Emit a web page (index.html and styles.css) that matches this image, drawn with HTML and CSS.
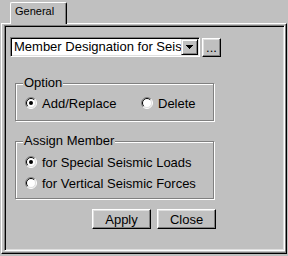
FILE: index.html
```html
<!DOCTYPE html>
<html lang="en">
<head>
    <meta charset="UTF-8">
    <meta name="viewport" content="width=device-width, initial-scale=1.0">
    <title>Member Designation for Seismic</title>
    <link rel="stylesheet" href="styles.css">
</head>
<body>

    <svg class="defs" width="0" height="0">
        <symbol id="radio-off" viewBox="0 0 12 12">
            <circle cx="6" cy="6" r="5" fill="#fff"/>
            <path d="M2.1 9.9A5.5 5.5 0 0 1 9.9 2.1" fill="none" stroke="#808080"/>
            <path d="M9.9 2.1A5.5 5.5 0 0 1 2.1 9.9" fill="none" stroke="#fff"/>
            <path d="M2.8 9.2A4.5 4.5 0 0 1 9.2 2.8" fill="none" stroke="#000"/>
            <path d="M9.2 2.8A4.5 4.5 0 0 1 2.8 9.2" fill="none" stroke="#dfdfdf"/>
        </symbol>
        <symbol id="radio-on" viewBox="0 0 12 12">
            <use href="#radio-off"/>
            <circle cx="6" cy="6" r="2" fill="#000"/>
        </symbol>
    </svg>

    <div class="tabs">
        <div class="tab">General</div>
    </div>

    <div class="pane">
        <div class="panel">

            <div class="combo-row">
                <div class="combo">
                    <span class="combo-text">Member Designation for Seismic</span>
                    <span class="combo-btn">
                        <svg width="7" height="4" viewBox="0 0 7 4"><path d="M0 0h7v1H0zM1 1h5v1H1zM2 2h3v1H2zM3 3h1v1H3z" fill="#000"/></svg>
                    </span>
                </div>
                <button class="btn btn-more">...</button>
            </div>

            <fieldset class="group group-option">
                <legend>Option</legend>
                <div class="radio-row">
                    <label class="radio radio-wide"><svg class="rb"><use href="#radio-on"/></svg>Add/Replace</label>
                    <label class="radio"><svg class="rb"><use href="#radio-off"/></svg>Delete</label>
                </div>
            </fieldset>

            <fieldset class="group group-assign">
                <legend>Assign Member</legend>
                <label class="radio"><svg class="rb"><use href="#radio-on"/></svg>for Special Seismic Loads</label>
                <label class="radio"><svg class="rb"><use href="#radio-off"/></svg>for Vertical Seismic Forces</label>
            </fieldset>

            <div class="actions">
                <button class="btn">Apply</button>
                <button class="btn">Close</button>
            </div>

        </div>
    </div>

</body>
</html>
```

FILE: styles.css
```css
* {
    box-sizing: border-box;
}
body {
    font-family: 'Liberation Sans', Arial, sans-serif;
    font-size: 13px;
    color: #000;
    background-color: #c0c0c0;
    margin: 0;
    width: 288px;
    height: 256px;
    overflow: hidden;
}
.defs {
    position: absolute;
}
.tabs {
    display: flex;
    align-items: flex-start;
    height: 23px;
    padding-left: 10px;
}
.tab {
    position: relative;
    width: 57px;
    height: 22px;
    margin-top: 2px;
    margin-bottom: -1px;
    padding-left: 4px;
    border-top: 1px solid #fff;
    border-left: 1px solid #fff;
    border-right: 1px solid #000;
    border-radius: 2px 2px 0 0;
    box-shadow: inset -1px 0 #808080;
    background-color: #c0c0c0;
    font-size: 11px;
    line-height: 17px;
}
.pane {
    width: 286px;
    height: 231px;
    margin-left: 1px;
    padding: 1px 1px 2px 2px;
    border-top: 1px solid #fff;
    border-left: 1px solid #fff;
    border-right: 1px solid #000;
    border-bottom: 1px solid #000;
    box-shadow: inset -1px -1px #808080;
}
.panel {
    height: 100%;
    display: flex;
    flex-direction: column;
    align-items: flex-start;
    padding: 11px 0 0 5px;
    border: 1px solid;
    border-color: #808080 #fff #fff #808080;
    box-shadow: inset 1px 1px #000, inset -1px -1px #dfdfdf;
}
.combo-row {
    display: flex;
    align-items: flex-start;
}
.combo {
    display: flex;
    width: 190px;
    height: 20px;
    padding: 1px;
    background-color: #fff;
    border: 1px solid;
    border-color: #808080 #fff #fff #808080;
    box-shadow: inset 1px 1px #000, inset -1px -1px #dfdfdf;
}
.combo-text {
    flex: 1;
    padding-left: 2px;
    line-height: 16px;
    white-space: nowrap;
    overflow: hidden;
}
.combo-btn {
    display: flex;
    align-items: center;
    justify-content: center;
    width: 17px;
    height: 16px;
    background-color: #c0c0c0;
    border: 1px solid;
    border-color: #dfdfdf #000 #000 #dfdfdf;
    box-shadow: inset 1px 1px #fff, inset -1px -1px #808080;
}
.btn {
    font: inherit;
    color: #000;
    background-color: #c0c0c0;
    padding: 0;
    border: 1px solid;
    border-color: #fff #000 #000 #fff;
    box-shadow: inset -1px -1px #808080, inset 1px 1px #dfdfdf;
}
.btn-more {
    width: 19px;
    height: 19px;
    margin-top: 1px;
    margin-left: 2px;
    line-height: 15px;
}
.group {
    width: 199px;
    margin: 0 0 0 5px;
    min-width: 0;
    border: 1px solid #808080;
    box-shadow: inset 1px 1px #fff, 1px 1px #fff;
}
.group legend {
    margin-left: -2px;
    padding: 0 1px;
    line-height: 14px;
    background-color: #c0c0c0;
}
.group-option {
    margin-top: 19px;
    padding: 5px 0 9px 9px;
}
.group-assign {
    margin-top: 13px;
    padding: 6px 0 7px 9px;
}
.radio-row {
    display: flex;
}
.radio {
    display: flex;
    align-items: center;
    gap: 5px;
    height: 16px;
}
.radio + .radio {
    margin-top: 5px;
}
.radio-row .radio + .radio {
    margin-top: 0;
}
.radio-wide {
    width: 116px;
}
.rb {
    width: 12px;
    height: 12px;
    flex-shrink: 0;
}
.actions {
    display: flex;
    gap: 6px;
    margin-top: 10px;
    margin-left: 82px;
}
.actions .btn {
    width: 59px;
    height: 20px;
}
```
